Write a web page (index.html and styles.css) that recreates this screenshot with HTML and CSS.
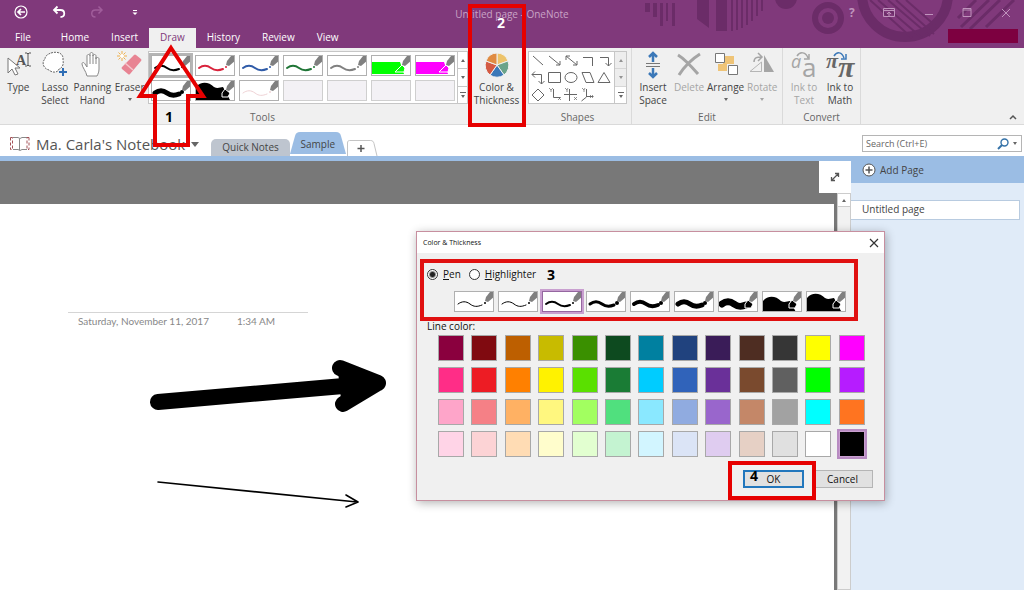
FILE: index.html
```html
<!DOCTYPE html>
<html lang="en">
<head>
    <meta charset="UTF-8">
    <meta name="viewport" content="width=device-width, initial-scale=1.0">
    <title>Untitled page - OneNote</title>
    <link rel="stylesheet" href="styles.css">
</head>
<body>

<header class="titlebar">
    <svg class="deco" width="400" height="47" viewBox="0 0 400 47" aria-hidden="true">
        <g fill="#6b2c68">
            <path d="M21 3h5v9h-5zM29 3h4v14h-4zM36 3h3v23h-3zM42 3h2v18h-2zM48 3h3v23h-3z"/>
            <path d="M73 0h12v28l-12-9zM92 0h11v31H92zM107 0h2v31h-2zM112 0h2v30h-2zM117 0h2v28h-2zM122 0h2v25h-2zM127 0h2v21h-2zM132 0h2v16h-2zM137 0h2v11h-2z"/>
            <circle cx="162" cy="-2" r="11"/>
            <circle cx="204" cy="18" r="6"/>
        </g>
        <g fill="none" stroke="#6b2c68">
            <circle cx="204" cy="18" r="13" stroke-width="6"/>
            <circle cx="281" cy="-6" r="43" stroke-width="10"/>
            <path d="M246 0l42 38M254 0l44 38M264 0l42 36M272 0l38 34M282 0l32 28" stroke-width="2"/>
            <path d="M334 18l18-18M337 27l28-27M346 29l30-29M362 27l28-27" stroke-width="3"/>
        </g>
    </svg>
    <div class="title-row">
        <div class="quick">
            <button aria-label="Back"><svg width="14" height="14" viewBox="0 0 14 14"><circle cx="7" cy="7" r="6" fill="none" stroke="#fff" stroke-width="1.2"/><path d="M11 7H4M7 4L4 7l3 3" fill="none" stroke="#fff" stroke-width="1.7"/></svg></button>
            <button aria-label="Undo"><svg width="14" height="14" viewBox="0 0 14 14"><path d="M2 5h6.500c5 0 5 7 0 7M5.500 1.500L2 5l3.500 3.500" fill="none" stroke="#fff" stroke-width="1.800"/></svg></button>
            <button aria-label="Redo" disabled><svg width="14" height="14" viewBox="0 0 14 14"><path d="M12 5H5.500c-5 0-5 7 0 7M8.500 1.500L12 5 8.500 8.500" fill="none" stroke="#a05d9b" stroke-width="1.500"/></svg></button>
            <button aria-label="Customize"><svg width="14" height="14" viewBox="0 0 14 14"><path d="M5 5.500h4" stroke="#fff"/><path d="M4.500 7.500h5L7 10z" fill="#fff"/></svg></button>
        </div>
        <div class="title">Untitled page - OneNote</div>
        <div class="window-buttons">
            <button aria-label="Help">?</button>
            <button aria-label="Ribbon display"><svg width="12" height="10" viewBox="0 0 12 10"><path d="M.5.5h11v8H.5zM1 2.500h10M6 8V4M4 6l2-2 2 2" fill="none" stroke="currentColor"/></svg></button>
            <button aria-label="Minimize"><svg width="10" height="10" viewBox="0 0 10 10"><path d="M1 6.500h8" stroke="currentColor"/></svg></button>
            <button aria-label="Maximize"><svg width="10" height="10" viewBox="0 0 10 10"><path d="M1 .5h8v8H1zM1 2h8" fill="none" stroke="currentColor"/></svg></button>
            <button aria-label="Close"><svg width="10" height="10" viewBox="0 0 10 10"><path d="M1 1l8 8M9 1L1 9" stroke="currentColor"/></svg></button>
        </div>
    </div>
    <div class="tab-row">
        <nav class="tabs">
            <a href="#">File</a>
            <a href="#">Home</a>
            <a href="#">Insert</a>
            <a href="#" class="active">Draw</a>
            <a href="#">History</a>
            <a href="#">Review</a>
            <a href="#">View</a>
        </nav>
        <div class="account"></div>
    </div>
</header>

<section class="ribbon">
    <div class="group group-tools">
        <div class="group-body">
            <button class="tool"><svg width="26" height="28" viewBox="0 0 26 28"><path d="M3 7v15l4-4 3 6 3-1-3-6h5z" fill="#fff" stroke="#777"/><text x="11" y="14" class="type-letter">A</text><path d="M20 2h2l1 1 1-1h2M23 3v11M20 15h2l1-1 1 1h2" fill="none" stroke="#555"/></svg>Type</button>
            <button class="tool"><svg width="26" height="28" viewBox="0 0 26 28"><path d="M9 2c6-2 13 0 12 7 1 5-1 8-4 9-1 4-7 4-10 1-7-2-7-9-4-11 0-3 3-5 6-6z" fill="#fff" stroke="#666" stroke-dasharray="2 1"/><path d="M21 17v8M17 21h8" stroke="#2f6eb5" stroke-width="2"/></svg>Lasso<br>Select</button>
            <button class="tool"><svg width="26" height="28" viewBox="0 0 26 28"><path d="M8 25c-1-5-5-9-5-12 0-2 2-2 3 0l2 3V5c0-2 3-2 3 0V3c0-2 3-2 3 0v2c0-2 3-2 3 0v3c0-2 3-2 3 0v10c0 3-1 5-2 7zM11 5v8M14 4v9M17 6v7" fill="#fff" stroke="#888"/></svg>Panning<br>Hand</button>
            <button class="tool"><svg width="26" height="28" viewBox="0 0 26 28"><path d="M17 4q1-1 2 0l5 4q1 1 0 2L13 23q-1 1-2 0l-6-5q-1-1 0-2z" fill="#e88493"/><path d="M8 12l8 7" stroke="#f6c6cc" stroke-width="1.500"/><path d="M5 0v10M0 5h10M1.500 1.500l7 7M8.500 1.500l-7 7" stroke="#efb04d"/><circle cx="5" cy="5" r="2" fill="#fff"/></svg>Eraser<i class="drop"></i></button>
            <div class="gallery pen-gallery">
                <div class="pens" id="ribbon-pens"></div>
                <div class="gallery-scroll"><button aria-label="Up"><i class="up"></i></button><button aria-label="Down"><i class="drop"></i></button><button aria-label="More"><i class="drop"></i></button></div>
            </div>
            <button class="tool tool-color"><svg width="26" height="28" viewBox="-13 -14 26 28"><g stroke="#f0f0f0"><path d="M0 0V-12A12 12 0 0 1 11-4z" fill="#edc36a"/><path d="M0 0L11-4A12 12 0 0 1 7 10z" fill="#6aa38a"/><path d="M0 0L7 10A12 12 0 0 1-7 10z" fill="#3b78b8"/><path d="M0 0L-7 10A12 12 0 0 1-11-4z" fill="#d45a43"/><path d="M0 0L-11-4A12 12 0 0 1 0-12z" fill="#e08b42"/></g></svg>Color &amp;<br>Thickness</button>
        </div>
        <div class="group-name">Tools</div>
    </div>
    <div class="group group-shapes">
        <div class="group-body">
            <div class="gallery">
                <svg width="85" height="50" viewBox="0 0 85 50" fill="none" stroke="#666">
                    <path d="M4 4l10 9M20 4l11 9M31 9v4h-4M37 4l11 9M37 8V4h4M48 9v4h-4M54 5.500h9.500V14M71 5.500h8.500V14M76.500 11l3 3 3-3"/>
                    <path d="M3 22.500h9.500V32M6 19.500l-3 3 3 3M9.500 29l3 3 3-3M19.500 20.500h12v10h-12zM53 20.500h8l4 10h-8zM75 20.500l6 10H69z"/>
                    <ellipse cx="42" cy="25.500" rx="6" ry="5"/>
                    <path d="M9 37l6 6-6 6-6-6zM24.500 37v8.500H31M40.500 37v12M35 42.500h13M57.500 37v8l-5 4M57.500 44.500h7"/>
                    <g stroke-width=".7"><path d="M20 36l2 2 2-2M22 38v2M29 45l3 3M32 45l-3 3M36 36l2 2 1-2M38 38v2M45 45l3 3M48 45l-3 3M53 36l2 2 1-2M55 38v2M61 43l3 3M64 43l-3 3"/></g>
                </svg>
                <div class="gallery-scroll wide"><button aria-label="Up" disabled><i class="up"></i></button><button aria-label="Down" disabled><i class="drop"></i></button><button aria-label="More"><i class="drop"></i></button></div>
            </div>
        </div>
        <div class="group-name">Shapes</div>
    </div>
    <div class="group group-edit">
        <div class="group-body">
            <button class="tool"><svg width="26" height="28" viewBox="0 0 26 28"><path d="M6 12.500h14M6 15.500h14" stroke="#777"/><path d="M13 11V3M9 6l4-4 4 4M13 17v8M9 22l4 4 4-4" fill="none" stroke="#3b78b8" stroke-width="2.500"/></svg>Insert<br>Space</button>
            <button class="tool" disabled><svg width="26" height="28" viewBox="0 0 26 28"><path d="M2 4c5 3 13 11 20 19M24 3C16 8 8 16 3 24" fill="none" stroke="#a5a5a5" stroke-width="3"/></svg>Delete</button>
            <button class="tool"><svg width="26" height="28" viewBox="0 0 26 28"><path d="M10 5h11v8h-7v7H5v-7h5z" fill="#efc477"/><path d="M2.500 2.500h9v9h-9zM15.500 14.500h9v9h-9z" fill="#fff" stroke="#777"/></svg>Arrange<i class="drop"></i></button>
            <button class="tool" disabled><svg width="26" height="28" viewBox="0 0 26 28"><path d="M15 4v17h10z" fill="#a5a5a5"/><path d="M12.500 11v9.500H1z" fill="none" stroke="#b5b5b5"/><path d="M5 11c0-5 4-5 7-5M9 2l4 4-4 4" fill="none" stroke="#a5a5a5" stroke-width="1.500"/></svg>Rotate<i class="drop"></i></button>
        </div>
        <div class="group-name">Edit</div>
    </div>
    <div class="group group-convert">
        <div class="group-body">
            <button class="tool" disabled><svg width="26" height="28" viewBox="0 0 26 28"><text x="0" y="17" class="glyph glyph-hand">a</text><text x="11" y="26" class="glyph glyph-big">a</text><path d="M6 5c3-5 9-4 11 2M18 3v5h-5" fill="none" stroke="#a5a5a5" stroke-width="1.500"/></svg>Ink to<br>Text</button>
            <button class="tool"><svg width="28" height="28" viewBox="0 0 28 28"><text x="0" y="17" class="glyph glyph-pi">π</text><text x="12" y="26" class="glyph glyph-pi glyph-pi-big">π</text><path d="M8 5c3-5 8-4 10 2M20 3v5h-5" fill="none" stroke="#3b78b8" stroke-width="1.500"/></svg>Ink to<br>Math</button>
        </div>
        <div class="group-name">Convert</div>
    </div>
    <button class="collapse" aria-label="Collapse ribbon"><svg width="8" height="6" viewBox="0 0 8 6"><path d="M1 5l3-3 3 3" fill="none" stroke="#555" stroke-width="1.500"/></svg></button>
</section>

<section class="notebook-bar">
    <button class="notebook">
        <svg width="20" height="16" viewBox="0 0 20 16" fill="none" stroke="#888"><path d="M9.500 2.500V14M3 1.500h5l2 1 2-1h5M3 13.500h5l2 1 2-1h5"/><path d="M.5 1.500h2v12h-2zM19 1.500h-2v12h2z" stroke="#a34f55" stroke-dasharray="3 2"/></svg>
        Ma. Carla's Notebook
        <i class="drop"></i>
    </button>
    <nav class="sections">
        <a href="#" class="section">Quick Notes</a>
        <a href="#" class="section current"><svg width="56" height="22" viewBox="0 0 56 22"><path d="M0 22L5 4c1-3 2-4 5-4h36c3 0 4 1 5 4l5 18z" fill="#9bbde4"/></svg><span>Sample</span></a>
        <a href="#" class="section add" aria-label="New section"><svg width="30" height="16" viewBox="0 0 30 16" fill="none"><path d="M.5 16V3c0-2 1-2.500 2-2.500h21c2 0 3 1 3.500 3L30 16" stroke="#c4c4c4"/><path d="M14 5v7M10.500 8.500h7" stroke="#555" stroke-width="1.500"/></svg></a>
    </nav>
    <div class="search">
        <input type="text" placeholder="Search (Ctrl+E)" aria-label="Search">
        <svg width="12" height="12" viewBox="0 0 12 12" fill="none" stroke="#3572a8"><circle cx="7.500" cy="4.500" r="3.500" stroke-width="1.400"/><path d="M5 7l-4 4" stroke-width="2"/></svg>
        <i class="drop"></i>
    </div>
</section>

<main class="workspace">
    <div class="canvas">
        <button class="expand" aria-label="Full page view"><svg width="10" height="10" viewBox="0 0 10 10" fill="none" stroke="#555" stroke-width="1.300"><path d="M2 8l6-6M5 1.500h3.500V5M1.500 5v3.500H5"/></svg></button>
        <div class="page">
            <div class="page-date"><span>Saturday, November 11, 2017</span><span>1:34 AM</span></div>
            <svg class="ink" width="240" height="160" viewBox="0 0 240 160" fill="none" stroke="#000" stroke-linecap="round" stroke-linejoin="round">
                <path d="M8 52L228 33M190 18L228 33 193 54" stroke-width="16"/>
                <path d="M192 21L224 33 195 49z" fill="#000" stroke-width="8"/>
                <path d="M8 132l199 20M196 145l12 7-12 5" stroke-width="1.600"/>
            </svg>
        </div>
        <div class="scrollbar"><button aria-label="Scroll up"><i class="up"></i></button></div>
    </div>
    <aside class="pages">
        <button class="add-page"><svg width="14" height="14" viewBox="0 0 14 14"><circle cx="7" cy="7" r="6" fill="#fff" stroke="#555"/><path d="M7 3.500v7M3.500 7h7" stroke="#555" stroke-width="1.500"/></svg>Add Page</button>
        <a href="#" class="page-link">Untitled page</a>
    </aside>
</main>

<div class="dialog" role="dialog" aria-labelledby="dialog-title">
    <div class="dialog-head">
        <span id="dialog-title">Color &amp; Thickness</span>
        <button aria-label="Close"><svg width="10" height="10" viewBox="0 0 10 10"><path d="M1 1l8 8M9 1L1 9" stroke="#333" stroke-width="1.200"/></svg></button>
    </div>
    <form class="dialog-body">
        <div class="marked">
            <div class="kind">
                <input type="radio" name="kind" id="kind-pen" checked>
                <label for="kind-pen"><u>P</u>en</label>
                <input type="radio" name="kind" id="kind-highlighter">
                <label for="kind-highlighter"><u>H</u>ighlighter</label>
                <b class="step">3</b>
            </div>
            <div class="pens" id="dialog-pens"></div>
        </div>
        <div class="line-color">Line color:</div>
        <div class="swatches" id="swatches"></div>
        <div class="dialog-buttons">
            <button type="button" class="ok">OK</button>
            <button type="button">Cancel</button>
            <div class="mark mark-ok"><b class="step">4</b></div>
        </div>
    </form>
</div>

<svg class="mark-arrow" width="70" height="106" viewBox="0 0 70 106"><path d="M34 4L66 52H51v49H18V52H3z" fill="none" stroke="#e60000" stroke-width="4"/><text x="28" y="78" class="step">1</text></svg>
<div class="mark mark-color"><b class="step">2</b></div>

<script src="script.js"></script>
</body>
</html>
```
FILE: styles.css
```css
* {
    box-sizing: border-box;
}
body {
    margin: 0;
    min-height: 100vh;
    display: flex;
    flex-direction: column;
    position: relative;
    font-family: "Open Sans", "Noto Sans", sans-serif;
    font-size: 10px;
    line-height: 13px;
    color: #444;
    background: #fff;
    overflow: hidden;
}
button {
    font: inherit;
    color: inherit;
    background: none;
    border: none;
    padding: 0;
}
a {
    color: inherit;
    text-decoration: none;
}
svg {
    display: block;
    flex: none;
    overflow: visible;
}
.drop, .up {
    display: block;
    border: 2px solid transparent;
    border-top: 3px solid #666;
    border-bottom: 0;
}
.up {
    border-top: 0;
    border-bottom: 3px solid #666;
}

/* title bar */
.titlebar {
    position: relative;
    background: #80397b;
    color: #fff;
}
.deco {
    position: absolute;
    right: 0;
    top: 0;
    overflow: hidden;
}
.title-row, .tab-row {
    position: relative;
    display: flex;
}
.title-row {
    height: 28px;
    align-items: center;
    justify-content: space-between;
}
.quick {
    display: flex;
    gap: 24px;
    width: 200px;
    padding: 0 0 4px 14px;
}
.title {
    color: #c9a3c6;
}
.window-buttons {
    display: flex;
    align-items: center;
    justify-content: space-between;
    width: 200px;
    padding: 0 13px 3px 25px;
    color: #bf93bc;
}
.window-buttons button:first-child {
    font-size: 12px;
    font-weight: bold;
}
.tab-row {
    justify-content: space-between;
    height: 20px;
}
.tabs {
    display: flex;
    font-size: 10px;
    line-height: 19px;
}
.tabs a {
    padding: 0 11px;
}
.tabs a:first-child {
    padding: 0 15px;
    margin-right: 4px;
}
.tabs .active {
    background: #f0f0f0;
    color: #80397b;
}
.account {
    width: 70px;
    height: 14px;
    margin: 1px 6px 0 0;
    background: #7d0040;
}

/* ribbon */
.ribbon {
    display: flex;
    position: relative;
    height: 77px;
    background: #f0f0f0;
    border-bottom: 1px solid #dadada;
}
.group {
    display: flex;
    flex-direction: column;
    justify-content: space-between;
    padding: 3px 3px 0;
    border-right: 1px solid #dadada;
}
.group-tools {
    width: 526px;
    padding: 3px 0 0;
}
.group-shapes {
    width: 106px;
    padding: 3px 4px 0 2px;
}
.group-edit {
    width: 151px;
}
.group-convert {
    width: 78px;
}
.group-body {
    display: flex;
    height: 58px;
}
.group-name {
    text-align: center;
    color: #666;
}
.tool {
    display: flex;
    flex-direction: column;
    align-items: center;
    justify-content: flex-start;
    flex: 1 0 36px;
    white-space: nowrap;
}
.tool svg {
    margin-bottom: 2px;
}
.tool .drop {
    margin-top: 4px;
}
.tool:disabled {
    color: #a5a5a5;
}
.tool:disabled .drop {
    border-top-color: #a5a5a5;
}
.type-letter {
    font: bold 14px "Liberation Serif", serif;
    fill: #555;
}
.glyph {
    font-size: 20px;
    fill: #a5a5a5;
}
.glyph-hand {
    font-size: 18px;
    font-style: italic;
}
.glyph-big {
    font-size: 26px;
}
.glyph-pi {
    font: italic bold 22px "Liberation Serif", serif;
    fill: #666;
}
.glyph-pi-big {
    font-size: 30px;
}
.gallery {
    display: flex;
    flex: 1;
    height: 53px;
    border: 1px solid #c6c6c6;
    background: #fff;
}
.gallery-scroll {
    display: flex;
    flex-direction: column;
    width: 10px;
    border-left: 1px solid #c6c6c6;
}
.gallery-scroll.wide {
    flex: 1;
}
.gallery-scroll button {
    flex: 1;
    display: flex;
    flex-direction: column;
    align-items: center;
    justify-content: center;
    border-bottom: 1px solid #c6c6c6;
}
.gallery-scroll button:last-child {
    border-bottom: 0;
}
.gallery-scroll button:last-child::before {
    content: "";
    width: 6px;
    height: 1px;
    margin-bottom: 2px;
    background: #666;
}
.gallery-scroll button:disabled {
    background: #e6e6e6;
    opacity: .7;
}
.pen-gallery {
    flex: 0 0 320px;
}
.pens {
    display: grid;
    grid-template-columns: repeat(auto-fill, 40px);
    gap: 4px;
    align-content: start;
}
.pen-gallery .pens {
    flex: 1;
    padding: 3px 0 0 2px;
}
.pen {
    height: 21px;
    border: 1px solid #b0b0b0;
    background: #fff;
    overflow: hidden;
}
.pen.empty {
    background: #f3f1f5;
    border-color: #cfcfcf;
}
.pen-gallery .pen.selected {
    outline: 2px solid #b5b5b5;
}
.tool-color {
    flex: 0 0 57px;
}
.collapse {
    margin: auto 7px 4px auto;
}

/* notebook and section tabs */
.notebook-bar {
    display: flex;
    align-items: flex-end;
    height: 36px;
    border-bottom: 5px solid #9bbde4;
}
.notebook {
    display: flex;
    align-items: center;
    gap: 6px;
    padding: 0 12px 2px 10px;
    font-size: 15px;
    line-height: 20px;
    color: #555;
}
.notebook .drop {
    border-width: 5px 4px 0;
}
.sections {
    display: flex;
    align-items: flex-end;
}
.section {
    padding: 0 11px;
    line-height: 17px;
    background: #bec5cf;
    border-radius: 5px 5px 0 0;
}
.section.current, .section.add {
    display: grid;
    padding: 0;
    background: none;
}
.section.add {
    margin-left: 1px;
}
.section.current svg, .section.current span {
    grid-area: 1 / 1;
    text-align: center;
}
.section.current span {
    line-height: 24px;
    z-index: 1;
}
.search {
    display: flex;
    align-items: center;
    gap: 4px;
    width: 160px;
    height: 17px;
    margin: 0 2px 4px auto;
    padding: 0 4px 0 3px;
    border: 1px solid #b5b5b5;
}
.search input {
    flex: 1;
    min-width: 0;
    padding: 0;
    border: 0;
    font: inherit;
    font-size: 9px;
}
.search input::placeholder {
    color: #666;
}

/* page area */
.workspace {
    flex: 1;
    display: flex;
}
.canvas {
    flex: 1;
    display: flex;
    position: relative;
    padding-top: 43px;
    background: #787878;
}
.expand {
    position: absolute;
    right: 0;
    top: 0;
    width: 32px;
    height: 32px;
    display: grid;
    place-items: center;
    background: #fff;
}
.page {
    flex: 1;
    padding: 108px 0 0 68px;
    background: #fff;
}
.page-date {
    display: flex;
    gap: 28px;
    width: 240px;
    padding: 2px 10px;
    border-top: 1px solid #d5d5d5;
    font-family: Lato, sans-serif;
    color: #888;
}
.ink {
    margin: 20px 0 0 82px;
}
.scrollbar {
    width: 14px;
    margin: -11px 0 0 3px;
    background: #f2f2f2;
    border: 1px solid #ccc;
}
.scrollbar button {
    display: grid;
    place-items: center;
    width: 12px;
    height: 13px;
    background: #fff;
    border-bottom: 1px solid #ccc;
}
.pages {
    width: 173px;
    background: #e0ebf8;
}
.add-page {
    display: flex;
    align-items: center;
    gap: 4px;
    width: 100%;
    height: 22px;
    padding: 0 11px 4px;
    background: #9bbde4;
}
.page-link {
    display: block;
    margin: 17px 4px 0 0;
    padding: 2px 11px 3px;
    background: #fff;
    border: 1px solid #b8cbe0;
    border-left: 0;
}

/* color & thickness dialog */
.dialog {
    position: absolute;
    left: 416px;
    top: 231px;
    width: 469px;
    background: #f0f0f0;
    border: 1px solid #c78f9f;
    box-shadow: 1px 2px 9px rgba(0, 0, 0, .3);
    color: #111;
}
.dialog-head {
    display: flex;
    justify-content: space-between;
    align-items: center;
    height: 21px;
    padding: 0 5px 0 6px;
    background: #fff;
    font-size: 7px;
}
.dialog-body {
    padding: 6px 11px 12px 3px;
}
.marked {
    width: 438px;
    height: 62px;
    border: 4px solid #e01010;
}
.kind {
    display: flex;
    align-items: center;
    height: 22px;
}
.kind input {
    appearance: none;
    width: 11px;
    height: 11px;
    margin: 0 5px 0 3px;
    border: 1px solid #333;
    border-radius: 50%;
    background: #fff;
}
.kind input:checked {
    background: radial-gradient(#222 2px, #fff 4px);
}
.kind label {
    margin-right: 5px;
}
.step {
    font-family: "Open Sans", sans-serif;
    font-size: 14px;
    font-weight: bold;
    color: #000;
}
.kind .step {
    margin-left: 6px;
}
.marked .pens {
    padding: 6px 0 0 30px;
}
.marked .pen.selected {
    outline: 2px solid #c9a0d0;
    border-color: #9567a0;
}
.line-color {
    padding: 0 7px;
    line-height: 10px;
}
.swatches {
    display: grid;
    grid-template-columns: repeat(13, 26px);
    justify-content: space-between;
    row-gap: 6px;
    padding: 4px 8px 0 18px;
}
.swatch {
    height: 26px;
    border: 1px solid #a8a8a8;
}
.swatch.selected {
    border-color: #c9a0d0;
    outline: 2px solid #b88bc2;
}
.dialog-buttons {
    position: relative;
    display: flex;
    justify-content: flex-end;
    gap: 8px;
    margin-top: 13px;
}
.dialog-buttons button {
    width: 61px;
    height: 18px;
    background: #e1e1e1;
    border: 1px solid #b5b5b5;
}
.dialog-buttons .ok {
    border: 2px solid #2277bd;
}

/* numbered step markers */
.mark {
    position: absolute;
    border: 4px solid #e60000;
    pointer-events: none;
}
.mark-color {
    left: 468px;
    top: 4px;
    width: 58px;
    height: 123px;
    text-align: center;
}
.mark-color .step {
    display: block;
    padding: 8px 0 0 8px;
    color: #fff;
}
.mark-ok {
    right: 57px;
    top: -9px;
    width: 88px;
    height: 39px;
    padding: 4px 18px;
}
.mark-arrow {
    position: absolute;
    left: 137px;
    top: 44px;
    pointer-events: none;
}
```
FILE: script.js
```js
const colors = [
    '#8a003e', '#800a10', '#bd5f00', '#c8bb00', '#3a9000', '#0d4a1f', '#0080a0', '#20427e', '#3a1c58', '#4e2d22', '#363636', '#ffff00', '#ff00ff',
    '#ff2d87', '#ed1c24', '#ff8000', '#fff200', '#5ae000', '#1a7c35', '#00ccff', '#3063ba', '#6a3099', '#7a4a2e', '#606060', '#00ff00', '#b61cff',
    '#fea5c9', '#f58086', '#ffb163', '#fff77f', '#a2ff60', '#50e07e', '#8ae8ff', '#90abe0', '#9966cc', '#c48768', '#a2a2a2', '#00ffff', '#ff7420',
    '#ffd4e7', '#fcd3d5', '#ffdcb4', '#fffdcc', '#e2ffd0', '#c4f3d1', '#d2f5ff', '#dbe4f6', '#dfccf0', '#e6d0c5', '#e0e0e0', '#ffffff', '#000000'
];

const ribbonPens = [
    ['#000', 2], ['#d9233c', 2], ['#2f5ba8', 2], ['#1f7536', 2], ['#808080', 2], ['#0f0', 'marker'], ['#f0f', 'marker'],
    ['#000', 5], ['#000', 16], ['#f0d3d6', 1], null, null, null, null
];
const dialogPens = [1, 1, 2, 3, 4, 5, 7, 12, 16].map(size => ['#000', size]);

function penImage(color, size) {
    const wave = 'M3 12C7 9 11 9 15 12S22 15 27 13';
    let ink = `<path d="${wave}" fill="none" stroke="${color}" stroke-width="${size}" stroke-linecap="round"/>`;
    let tip = `<circle cx="30" cy="11" r="${size > 2 ? 2 : 1}" fill="${color}"/>`;
    if (size === 'marker') {
        ink = `<path d="M0 6h28l4 12H0z" fill="${color}"/>`;
        tip = `<path d="M30 9l-7 7h9l1-4z" fill="${color}" stroke="#fff"/>`;
    } else if (size > 10) {
        const top = size > 12 ? 4 : 7;
        ink = `<path d="M0 ${top + 2}C5 ${top - 4} 13 ${top - 3} 18 ${top + 2}c4 2 6 0 9 0l7 13H0z"/>`;
    }
    if (size > 6) {
        tip = '<path d="M29 8l-3 4v4h6l2-4z" fill="#000" stroke="#fff"/>';
    }
    return `<svg width="38" height="19" viewBox="0 0 38 19">${ink}${tip}<path d="M30 9l1-4 4-5h4v5l-6 5z" fill="#808080"/></svg>`;
}

function renderPens(id, pens, selected) {
    document.getElementById(id).innerHTML = pens.map((pen, i) => {
        if (!pen) return '<div class="pen empty"></div>';
        return `<button type="button" aria-label="Pen ${i + 1}" class="pen${i === selected ? ' selected' : ''}">${penImage(pen[0], pen[1])}</button>`;
    }).join('');
}

renderPens('ribbon-pens', ribbonPens, 0);
renderPens('dialog-pens', dialogPens, 2);

document.getElementById('swatches').innerHTML = colors.map((color, i) =>
    `<button type="button" aria-label="${color}" class="swatch${i === colors.length - 1 ? ' selected' : ''}" style="background:${color}"></button>`
).join('');
```
